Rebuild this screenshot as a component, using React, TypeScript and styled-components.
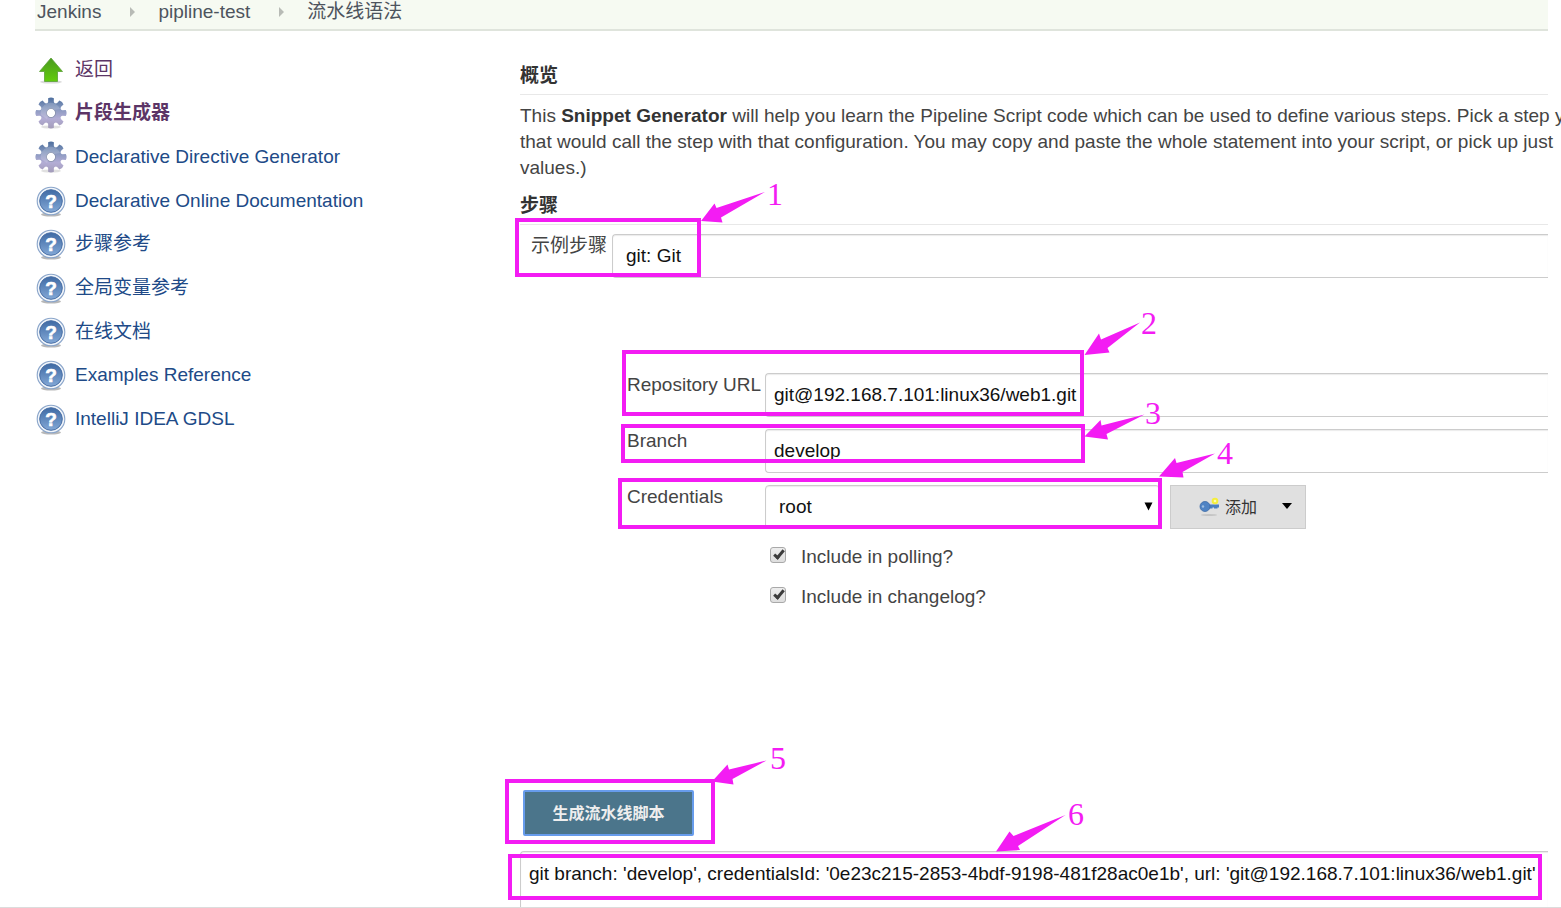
import React from "react";
import styled, { createGlobalStyle } from "styled-components";

const FONT = '"Liberation Sans", "Noto Sans CJK SC", sans-serif';
const MARK = "#f31cf3";

const GlobalStyle = createGlobalStyle`
  *, *::before, *::after { box-sizing: border-box; }
  body { margin: 0; background: #fff; }
  body, input, select, textarea, button { font-family: ${FONT}; font-size: 19px; }
`;

const Page = styled.div`
  position: relative;
  display: flex;
  flex-direction: column;
  height: 100vh;
  min-height: 900px;
  padding: 0 13px 0 35px;
  overflow: hidden;
  color: #444;
  border-bottom: 1px solid #dcdcdc;
`;

const Breadcrumbs = styled.nav`
  display: flex;
  align-items: center;
  height: 31px;
  padding: 0 2px 6px;
  line-height: 24px;
  background: #f6faf2;
  border-bottom: 2px solid #dfe4dc;
`;

const Crumb = styled.a`
  color: #4d545d;
  text-decoration: none;
`;

const Separator = styled.span`
  width: 0;
  height: 0;
  margin: 0 23px 0 29px;
  border-left: 5px solid #b8bbb6;
  border-top: 5px solid transparent;
  border-bottom: 5px solid transparent;
`;

const Columns = styled.div`
  display: grid;
  grid-template-columns: 485px minmax(0, 1fr);
  flex: 1;
  min-height: 0;
`;

const TaskList = styled.ul`
  display: grid;
  grid-template-rows: repeat(9, 1fr);
  height: 393px;
  margin: 17px 0 0;
  padding: 0;
  list-style: none;
`;

const Task = styled.li`
  display: flex;
  align-items: center;
`;

const TaskLink = styled.a<{ $visited?: boolean; $current?: boolean }>`
  display: flex;
  align-items: center;
  gap: 8px;
  line-height: 24px;
  color: ${(p) => (p.$visited ? "#5c3566" : "#204a87")};
  font-weight: ${(p) => (p.$current ? 700 : 400)};
  text-decoration: none;
  svg { display: block; flex: none; }
`;

const Main = styled.main`
  display: flex;
  flex-direction: column;
  min-width: 0;
  padding-top: 33px;
`;

const SectionTitle = styled.h2`
  margin: 0;
  height: 31px;
  font-size: 19px;
  line-height: 24px;
  color: #333;
  border-bottom: 1px solid #e8e8e8;
`;

const Intro = styled.p`
  margin: 8px 0 13px;
  line-height: 26px;
  white-space: nowrap;
  b { color: #333; }
`;

const StepRow = styled.div`
  display: flex;
  margin: 9px 0 95px;
  padding-left: 11px;
  gap: 5px;
`;

const FieldLabel = styled.label`
  flex: none;
  line-height: 24px;
`;

const Select = styled.select<{ $open?: boolean }>`
  appearance: none;
  width: 100%;
  height: 44px;
  padding: 0 30px 2px 13px;
  color: #111;
  background: #fff;
  border: 1px solid #ccc;
  border-right-width: ${(p) => (p.$open ? 0 : 1)}px;
  border-radius: ${(p) => (p.$open ? "4px 0 0 4px" : "4px")};
  box-shadow: inset 0 1px 1px rgba(0, 0, 0, 0.08);
  outline: none;
`;

const SettingsForm = styled.form`
  display: grid;
  grid-template-columns: 138px minmax(0, 1fr);
  row-gap: 12px;
  margin-left: 107px;
`;

const TextInput = styled.input`
  width: 100%;
  height: 44px;
  padding: 0 8px;
  color: #111;
  background: #fff;
  border: 1px solid #ccc;
  border-right: 0;
  border-radius: 4px 0 0 4px;
  box-shadow: inset 0 1px 1px rgba(0, 0, 0, 0.08);
  outline: none;
`;

const CredentialRow = styled.div`
  display: flex;
  gap: 10px;
`;

const SelectWrap = styled.div`
  position: relative;
  width: 395px;
  svg {
    position: absolute;
    right: 7px;
    top: 17px;
    pointer-events: none;
  }
`;

const AddButton = styled.button`
  display: flex;
  align-items: center;
  width: 136px;
  height: 44px;
  padding: 0 0 2px 28px;
  gap: 5px;
  font-size: 16px;
  color: #333;
  background: #e0e0e0;
  border: 1px solid #ccc;
`;

const AddCaret = styled.span`
  margin-left: 20px;
  border-top: 6px solid #000;
  border-left: 5px solid transparent;
  border-right: 5px solid transparent;
`;

const CheckList = styled.div`
  grid-column: 2;
  display: flex;
  flex-direction: column;
  gap: 16px;
  padding: 4px 0 0 5px;
`;

const CheckLabel = styled.label`
  display: flex;
  gap: 15px;
  line-height: 24px;
`;

const CheckBox = styled.input`
  appearance: none;
  width: 16px;
  height: 16px;
  margin: 2px 0 0;
  background: linear-gradient(#ededed, #dedede);
  border: 1px solid #a9a9a9;
  border-radius: 3px;
  position: relative;
  &:checked::after {
    content: "";
    position: absolute;
    left: 5px;
    top: 0;
    width: 6px;
    height: 11px;
    border: solid #3c3c3c;
    border-width: 0 3px 3px 0;
    transform: rotate(40deg);
  }
`;

const GenerateButton = styled.button`
  flex: none;
  align-self: flex-start;
  width: 171px;
  height: 46px;
  margin: 181px 0 15px 3px;
  padding: 0 0 2px;
  font-size: 16px;
  font-weight: 700;
  color: #eee;
  background: #4b758b;
  border: 2px solid #679cec;
  border-radius: 2px;
`;

const Output = styled.textarea`
  display: block;
  flex: 1;
  min-height: 40px;
  width: 100%;
  padding: 9px 0 9px 8px;
  line-height: 26px;
  color: #111;
  border: 1px solid #ccc;
  border-width: 1px 0 0 1px;
  border-radius: 4px 0 0 0;
  box-shadow: inset 0 1px 1px rgba(0, 0, 0, 0.08);
  white-space: nowrap;
  resize: none;
  overflow: hidden;
  outline: none;
`;

const Overlay = styled.div`
  position: absolute;
  inset: 0;
  pointer-events: none;
`;

const Arrows = styled.svg`
  position: absolute;
  inset: 0;
  width: 100%;
  height: 100%;
`;

const MarkBox = styled.div<{ $x: number; $y: number; $w: number; $h: number }>`
  position: absolute;
  left: ${(p) => p.$x}px;
  top: ${(p) => p.$y}px;
  width: ${(p) => p.$w}px;
  height: ${(p) => p.$h}px;
  border: 4px solid ${MARK};
`;

const MarkNumber = styled.span<{ $x: number; $y: number }>`
  position: absolute;
  left: ${(p) => p.$x - 10}px;
  top: ${(p) => p.$y - 16}px;
  width: 20px;
  font: 32px/32px "Liberation Serif", serif;
  text-align: center;
  color: ${MARK};
`;

const UpIcon = () => (
  <svg width="32" height="32" viewBox="0 0 32 32" aria-hidden="true">
    <defs>
      <linearGradient id="up" x1="0" y1="0" x2="0" y2="1">
        <stop offset="0" stopColor="#4a9a20" />
        <stop offset="1" stopColor="#63cc0c" />
      </linearGradient>
    </defs>
    <ellipse cx="16" cy="28" rx="11" ry="1.6" fill="#000" opacity=".14" />
    <path d="M16 4 27.500 17.500H22.500V27.500H9.500V17.500H4.500Z" fill="url(#up)" stroke="#5aa038" strokeWidth=".8" strokeLinejoin="round" />
  </svg>
);

const TOOTH = "M11.800 8 13.200 4.500 13.100 1.200Q16 -.4 18.900 1.200L18.800 4.500 20.200 8Z";

const GearIcon = () => (
  <svg width="32" height="32" viewBox="0 0 32 32" aria-hidden="true">
    <defs>
      <linearGradient id="gear" gradientUnits="userSpaceOnUse" x1="16" y1="0" x2="16" y2="31">
        <stop offset="0" stopColor="#4a6c9c" />
        <stop offset=".35" stopColor="#8396bd" />
        <stop offset=".7" stopColor="#b3add5" />
        <stop offset="1" stopColor="#a39cba" />
      </linearGradient>
      <mask id="gearShape">
        <g fill="#fff">
          <circle cx="16" cy="16" r="10.500" />
          {[0, 45, 90, 135, 180, 225, 270, 315].map((a) => (
            <path key={a} d={TOOTH} transform={`rotate(${a} 16 16)`} />
          ))}
        </g>
        <circle cx="16" cy="16" r="4.200" fill="#000" />
      </mask>
    </defs>
    <ellipse cx="16" cy="30" rx="10" ry="1.600" fill="#000" opacity=".12" />
    <rect width="32" height="32" fill="url(#gear)" mask="url(#gearShape)" />
    <circle cx="16" cy="16" r="4.600" fill="none" stroke="#8791a8" strokeWidth=".8" />
    <path d="M6 18a10 10 0 0 1 19-6q-10 0-13 10z" fill="#fff" opacity=".16" mask="url(#gearShape)" />
  </svg>
);

const HelpIcon = () => (
  <svg width="32" height="32" viewBox="0 0 32 32" aria-hidden="true">
    <defs>
      <linearGradient id="help" x1="0" y1="0" x2="0" y2="1">
        <stop offset="0" stopColor="#3f6aa4" />
        <stop offset="1" stopColor="#83a8d6" />
      </linearGradient>
    </defs>
    <ellipse cx="16" cy="29.500" rx="10" ry="2" fill="#000" opacity=".28" />
    <circle cx="16" cy="16" r="13.800" fill="#f2f6fb" stroke="#8aa5ca" strokeWidth="1.100" />
    <circle cx="16" cy="16" r="11.300" fill="url(#help)" stroke="#4a70a6" strokeWidth="1" />
    <text x="16" y="22.500" textAnchor="middle" fontFamily="Liberation Sans, sans-serif" fontSize="19" fontWeight="700" fill="#fff" stroke="#fff" strokeWidth=".6">?</text>
  </svg>
);

const KeyIcon = () => (
  <svg width="21" height="20" viewBox="0 0 21 20" aria-hidden="true">
    <ellipse cx="10" cy="19" rx="8" ry="1" fill="#000" opacity=".12" />
    <path d="M9 8.500H20V11.500H18.500V12.500H15V11.500H13.500V12.500H10Z" fill="#4b7fc0" />
    <circle cx="6" cy="10.500" r="5" fill="#4f83c4" stroke="#3e6ba6" strokeWidth=".8" />
    <circle cx="4" cy="10.500" r="1.200" fill="#9dbde2" />
    <circle cx="16" cy="5" r="3.300" fill="#f5ee3c" />
    <circle cx="16" cy="5" r="1.300" fill="#fffbb0" />
  </svg>
);

const tasks = [
  { icon: UpIcon, text: "返回", visited: true },
  { icon: GearIcon, text: "片段生成器", visited: true, current: true },
  { icon: GearIcon, text: "Declarative Directive Generator" },
  { icon: HelpIcon, text: "Declarative Online Documentation" },
  { icon: HelpIcon, text: "步骤参考" },
  { icon: HelpIcon, text: "全局变量参考" },
  { icon: HelpIcon, text: "在线文档" },
  { icon: HelpIcon, text: "Examples Reference" },
  { icon: HelpIcon, text: "IntelliJ IDEA GDSL" },
];

const marks = [
  { box: [515, 218, 186, 59], num: [775, 194], arrow: "765,192 716.5,208 714.5,203.5 701,221 722.5,222.5 721,217.5" },
  { box: [622, 350, 462, 66], num: [1149, 323], arrow: "1140,322.5 1101,339.5 1099,333.5 1084.5,355 1109.5,352.5 1107.5,348" },
  { box: [621, 424, 464, 39], num: [1153, 413], arrow: "1144.5,414.5 1101.5,425.5 1100.5,420 1084.5,436.5 1108,439.5 1106.5,434" },
  { box: [618, 478, 544, 51], num: [1225, 453], arrow: "1215,453.5 1176.5,463 1175,458 1159,476.5 1183.5,477.5 1182.5,472" },
  { box: [505, 779, 210, 65], num: [778, 758], arrow: "766.5,760.5 729,769.5 727.5,764.5 712,781.5 733.5,784.5 732.5,779" },
  { box: [508, 854, 1034, 46], num: [1076, 814], arrow: "1065.500,815 1013.500,836 1009.500,831.500 996,851.500 1020,850 1018,846" },
];

export default function App() {
  return (
    <Page>
      <GlobalStyle />
      <Breadcrumbs>
        <Crumb href="#">Jenkins</Crumb>
        <Separator />
        <Crumb href="#">pipline-test</Crumb>
        <Separator />
        <Crumb href="#">流水线语法</Crumb>
      </Breadcrumbs>
      <Columns>
        <TaskList>
          {tasks.map(({ icon: Icon, text, visited, current }) => (
            <Task key={text}>
              <TaskLink href="#" $visited={visited} $current={current}>
                <Icon />
                {text}
              </TaskLink>
            </Task>
          ))}
        </TaskList>
        <Main>
          <SectionTitle>概览</SectionTitle>
          <Intro>
            This <b>Snippet Generator</b> will help you learn the Pipeline Script code which can be used to define various steps. Pick a step y
            <br />
            that would call the step with that configuration. You may copy and paste the whole statement into your script, or pick up just
            <br />
            values.)
          </Intro>
          <SectionTitle>步骤</SectionTitle>
          <StepRow>
            <FieldLabel htmlFor="step">示例步骤</FieldLabel>
            <Select id="step" $open>
              <option>git: Git</option>
            </Select>
          </StepRow>
          <SettingsForm>
            <FieldLabel htmlFor="url">Repository URL</FieldLabel>
            <TextInput id="url" defaultValue="git@192.168.7.101:linux36/web1.git" />
            <FieldLabel htmlFor="branch">Branch</FieldLabel>
            <TextInput id="branch" defaultValue="develop" />
            <FieldLabel htmlFor="cred">Credentials</FieldLabel>
            <CredentialRow>
              <SelectWrap>
                <Select id="cred">
                  <option>root</option>
                </Select>
                <svg width="9" height="9" viewBox="0 0 9 9" aria-hidden="true">
                  <path d="M.5.5H8.500L4.500 8.500Z" fill="#000" />
                </svg>
              </SelectWrap>
              <AddButton type="button">
                <KeyIcon />
                添加
                <AddCaret />
              </AddButton>
            </CredentialRow>
            <CheckList>
              <CheckLabel>
                <CheckBox type="checkbox" defaultChecked />
                Include in polling?
              </CheckLabel>
              <CheckLabel>
                <CheckBox type="checkbox" defaultChecked />
                Include in changelog?
              </CheckLabel>
            </CheckList>
          </SettingsForm>
          <GenerateButton type="button">生成流水线脚本</GenerateButton>
          <Output
            readOnly
            aria-label="Pipeline script"
            value="git branch: 'develop', credentialsId: '0e23c215-2853-4bdf-9198-481f28ac0e1b', url: 'git@192.168.7.101:linux36/web1.git'"
          />
        </Main>
      </Columns>
      <Overlay>
        <Arrows aria-hidden="true">
          {marks.map((m) => (
            <polygon key={m.arrow} points={m.arrow} fill={MARK} />
          ))}
        </Arrows>
        {marks.map((m, i) => (
          <React.Fragment key={i}>
            <MarkBox $x={m.box[0]} $y={m.box[1]} $w={m.box[2]} $h={m.box[3]} />
            <MarkNumber $x={m.num[0]} $y={m.num[1]}>{i + 1}</MarkNumber>
          </React.Fragment>
        ))}
      </Overlay>
    </Page>
  );
}
